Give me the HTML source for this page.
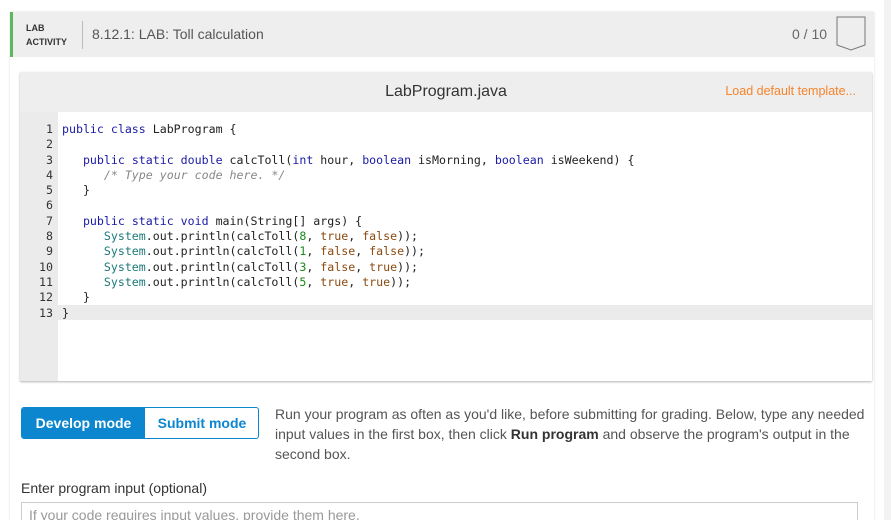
<!DOCTYPE html>
<html><head><style>
*{margin:0;padding:0;box-sizing:border-box}
html{width:891px;height:520px;overflow:hidden}
body{width:891px;height:520px;overflow:hidden;background:#fff;font-family:"Liberation Sans",Arial,sans-serif;position:relative}
.strip{position:absolute;left:884px;top:0;width:7px;height:520px;background:#f3f3f3}
.card{position:absolute;left:10px;top:12px;width:864px;height:508px;background:#fff;box-shadow:0 0 2px rgba(0,0,0,.15)}
.hdr{position:absolute;left:0;top:0;width:864px;height:45px;background:#eeeeee;border-left:3px solid #5cb85c}
.lab{position:absolute;left:13px;top:9px;font-size:9px;font-weight:bold;color:#333;line-height:14px}
.sep{position:absolute;left:69px;top:9px;width:1px;height:28px;background:#bbb}
.title{position:absolute;left:79px;top:14px;font-size:14px;color:#555}
.score{position:absolute;left:779px;top:14px;font-size:14px;color:#666}
.ed{position:absolute;left:20px;top:72px;width:852px;height:309px;box-shadow:0 1px 2px rgba(0,0,0,.3);background:#fff}
.tb{height:40px;background:#eeeeee;position:relative}
.fn{position:absolute;left:0;width:852px;text-align:center;top:11px;font-size:16px;color:#333}
.ld{position:absolute;right:16px;top:12px;font-size:12.5px;color:#f5842b}
.gut{position:absolute;left:0;top:40px;width:38px;height:269px;background:#ebebeb}
.cur{position:absolute;left:0;top:233px;width:852px;height:15px;background:#ebebeb}
.code{position:absolute;left:0;top:50px;font-family:"DejaVu Sans Mono","Liberation Mono",monospace;font-size:11.6px;line-height:15.3px;white-space:pre;color:#222}
.ln{display:inline-block;width:33px;text-align:right;color:#333;margin-right:9px}
.k{color:#1a1aa6}.s{color:#1c7a7a}.n{color:#1a8a1a}.b{color:#8b4a10}.c{color:#888;font-style:italic}
.btns{position:absolute;left:21px;top:407px;width:238px;height:32px;border:1px solid #0b86cf;border-radius:3px;overflow:hidden;font-weight:bold;font-size:14px}
.dv{position:absolute;left:0;top:0;width:123px;height:30px;background:#0b86cf;color:#fff;text-align:center;line-height:30px}
.sb{position:absolute;left:123px;top:0;width:114px;height:30px;color:#0b86cf;text-align:center;line-height:30px}
.info{position:absolute;left:275px;top:404px;width:600px;font-size:14px;line-height:20px;color:#555}
.info b{color:#333}
.lbl{position:absolute;left:21px;top:480px;font-size:14px;color:#333}
.inp{position:absolute;left:21px;top:502px;width:837px;height:30px;border:1px solid #ccc;font-size:14px;color:#999;padding:4px 7px}
</style></head><body>
<div class="strip"></div>
<div class="card">
<div class="hdr">
<div class="lab">LAB<br>ACTIVITY</div><div class="sep"></div>
<div class="title">8.12.1: LAB: Toll calculation</div>
<div class="score">0 / 10</div>
<svg style="position:absolute;left:823px;top:4px" width="32" height="36"><path d="M1 1H29V29L15 34L1 29Z" fill="none" stroke="#777" stroke-width="1"/></svg>
</div>
</div>
<div class="ed">
<div class="tb"><div class="fn">LabProgram.java</div><div class="ld">Load default template...</div></div>
<div class="gut"></div><div class="cur"></div>
<div class="code"><span class="ln">1</span><span class="k">public class</span> LabProgram {
<span class="ln">2</span>
<span class="ln">3</span>   <span class="k">public static double</span> calcToll(<span class="k">int</span> hour, <span class="k">boolean</span> isMorning, <span class="k">boolean</span> isWeekend) {
<span class="ln">4</span>      <span class="c">/* Type your code here. */</span>
<span class="ln">5</span>   }
<span class="ln">6</span>
<span class="ln">7</span>   <span class="k">public static void</span> main(String[] args) {
<span class="ln">8</span>      <span class="s">System</span>.out.println(calcToll(<span class="n">8</span>, <span class="b">true</span>, <span class="b">false</span>));
<span class="ln">9</span>      <span class="s">System</span>.out.println(calcToll(<span class="n">1</span>, <span class="b">false</span>, <span class="b">false</span>));
<span class="ln">10</span>      <span class="s">System</span>.out.println(calcToll(<span class="n">3</span>, <span class="b">false</span>, <span class="b">true</span>));
<span class="ln">11</span>      <span class="s">System</span>.out.println(calcToll(<span class="n">5</span>, <span class="b">true</span>, <span class="b">true</span>));
<span class="ln">12</span>   }
<span class="ln">13</span>}</div>
</div>
<div class="btns"><div class="dv">Develop mode</div><div class="sb">Submit mode</div></div>
<div class="info">Run your program as often as you'd like, before submitting for grading. Below, type any needed input values in the first box, then click <b>Run program</b> and observe the program's output in the second box.</div>
<div class="lbl">Enter program input (optional)</div>
<div class="inp">If your code requires input values, provide them here.</div>
</body></html>
